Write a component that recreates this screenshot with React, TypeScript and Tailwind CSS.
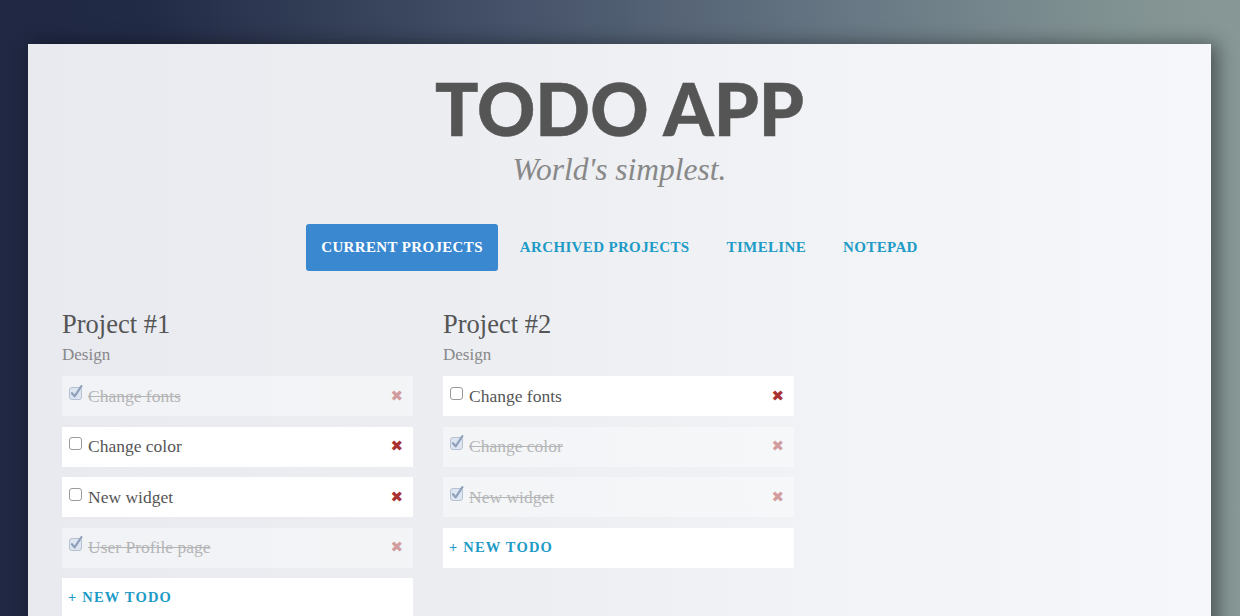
import React from 'react';

type Todo = { text: string; done: boolean };
type Project = { name: string; category: string; todos: Todo[] };

const PROJECTS: Project[] = [
  {
    name: 'Project #1',
    category: 'Design',
    todos: [
      { text: 'Change fonts', done: true },
      { text: 'Change color', done: false },
      { text: 'New widget', done: false },
      { text: 'User Profile page', done: true },
    ],
  },
  {
    name: 'Project #2',
    category: 'Design',
    todos: [
      { text: 'Change fonts', done: false },
      { text: 'Change color', done: true },
      { text: 'New widget', done: true },
    ],
  },
];

const TABS = ['Current Projects', 'Archived Projects', 'Timeline', 'Notepad'];

const serif = "font-['Liberation_Serif','Times_New_Roman',serif]";

const CheckBox = ({ checked }: { checked: boolean }) => (
  <svg width="15" height="15" viewBox="0 0 15 15" className="shrink-0 -mt-2">
    <rect
      x="1.5"
      y="2.5"
      width="12"
      height="12"
      rx="2.5"
      fill={checked ? '#c9d9ee' : '#ffffff'}
      stroke={checked ? '#7a8fae' : '#9a9a9a'}
      strokeWidth="1"
    />
    {checked && (
      <path
        d="M4 8.2 L6.6 11.3 L13.4 1.2"
        fill="none"
        stroke="#2f4f80"
        strokeWidth="2.2"
        strokeLinecap="round"
        strokeLinejoin="round"
      />
    )}
  </svg>
);

const TodoRow = ({ todo }: { todo: Todo }) => (
  <div
    className={`h-10 flex items-center pl-[6px] pr-[10px] ${todo.done ? 'bg-white/40' : 'bg-white'}`}
  >
    <div className={`flex items-center gap-[5px] flex-1 ${todo.done ? 'opacity-50' : ''}`}>
      <CheckBox checked={todo.done} />
      <span className={`text-[17.5px] text-[#555] ${todo.done ? 'line-through text-[#777]' : ''}`}>
        {todo.text}
      </span>
    </div>
    <span
      className={`font-['DejaVu_Sans',sans-serif] text-[15px] leading-none text-[#a83232] ${
        todo.done ? 'opacity-45' : ''
      }`}
    >
      ✖
    </span>
  </div>
);

const ProjectColumn = ({ project }: { project: Project }) => (
  <div className="w-[351px]">
    <h2 className="text-[26.5px] leading-none text-[#555]">{project.name}</h2>
    <p className="mt-[9px] text-[17px] leading-none text-[#888]">{project.category}</p>
    <div className="mt-[13px] flex flex-col gap-[10.5px]">
      {project.todos.map((todo, i) => (
        <TodoRow key={i} todo={todo} />
      ))}
      <div className="h-10 bg-white flex items-center pl-[6px]">
        <span className="text-[14.5px] font-bold uppercase tracking-[1.2px] text-[#1d9bc6]">+ New Todo</span>
      </div>
    </div>
  </div>
);

export default function App() {
  return (
    <div className="w-[1240px] h-[616px] overflow-hidden bg-[linear-gradient(90deg,#1f2742_0%,#222b46_12%,#46536a_42%,#6c7c87_72%,#819292_90%,#879896_100%)] pt-[44px] pl-[28px]">
      <div className={`w-[1183px] h-[620px] bg-[linear-gradient(90deg,#e8eaef_0%,#eceef2_40%,#f2f4f7_75%,#f5f7fa_100%)] shadow-[6px_0_18px_rgba(0,0,0,0.45)] ${serif}`}>
        <div className="pt-[28px] flex flex-col items-center">
          <h1 className="font-['Lato',sans-serif] font-black text-[72px] leading-none tracking-[0px] text-[#555] [-webkit-text-stroke:0.5px_#555]">
            TODO APP
          </h1>
          <p className="mt-[10px] text-[31.5px] leading-none italic text-[#888]">World's simplest.</p>
          <nav className="mt-[38px] flex items-center gap-[7px]">
            {TABS.map((tab, i) => (
              <button
                key={tab}
                className={`h-[47px] px-[15px] rounded-[3px] text-[15px] font-bold uppercase tracking-[0.35px] ${
                  i === 0 ? 'bg-[#3a88d0] text-white' : 'text-[#1d9bc6]'
                }`}
              >
                {tab}
              </button>
            ))}
          </nav>
        </div>
        <div className="mt-[40px] pl-[34px] flex gap-[30px]">
          {PROJECTS.map((p) => (
            <ProjectColumn key={p.name} project={p} />
          ))}
        </div>
      </div>
    </div>
  );
}
